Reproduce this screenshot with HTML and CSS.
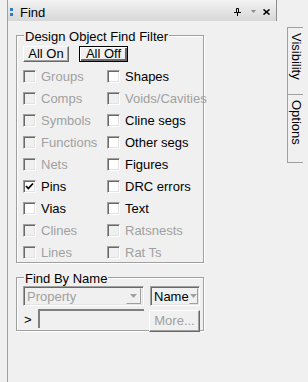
FILE: index.html
```html
<!DOCTYPE html>
<html>
<head>
<meta charset="utf-8">
<link rel="stylesheet" href="styles.css">
</head>
<body>
<div class="window">
  <div class="edge"></div>
  <div class="panel">
    <div class="titlebar">
      <span class="grip"><i></i><i></i></span>
      <span class="title">Find</span>
      <span class="tools">
        <svg class="pin" width="7" height="8" viewBox="0 0 7 8"><path d="M2.5 0.5h2v4h-2z M0 4.5h7 M3.5 4.5v3.5" fill="none" stroke="#000"/></svg>
        <svg class="menu" width="5" height="3" viewBox="0 0 5 3"><path d="M0 0h5l-2.5 3z" fill="#8a8a8a"/></svg>
        <svg class="close" width="7" height="6" viewBox="0 0 7 6"><path d="M0.5 0.5l6 5 M6.5 0.5l-6 5" stroke="#000" stroke-width="1.6"/></svg>
      </span>
    </div>
    <div class="content">
      <div class="group filter">
        <span class="group-title">Design Object Find Filter</span>
        <div class="btn-row">
          <button class="btn btn-on">All On</button>
          <button class="btn btn-off btn-default">All Off</button>
        </div>
        <div class="checks">
          <label class="chk disabled"><span class="box"></span>Groups</label>
          <label class="chk"><span class="box"></span>Shapes</label>
          <label class="chk disabled"><span class="box"></span>Comps</label>
          <label class="chk disabled"><span class="box"></span>Voids/Cavities</label>
          <label class="chk disabled"><span class="box"></span>Symbols</label>
          <label class="chk"><span class="box"></span>Cline segs</label>
          <label class="chk disabled"><span class="box"></span>Functions</label>
          <label class="chk"><span class="box"></span>Other segs</label>
          <label class="chk disabled"><span class="box"></span>Nets</label>
          <label class="chk"><span class="box"></span>Figures</label>
          <label class="chk"><span class="box"><svg width="9" height="9" viewBox="0 0 9 9"><path d="M1 4l2.3 2.5L8 1.5" fill="none" stroke="#000" stroke-width="1.8"/></svg></span>Pins</label>
          <label class="chk"><span class="box"></span>DRC errors</label>
          <label class="chk"><span class="box"></span>Vias</label>
          <label class="chk"><span class="box"></span>Text</label>
          <label class="chk disabled"><span class="box"></span>Clines</label>
          <label class="chk disabled"><span class="box"></span>Ratsnests</label>
          <label class="chk disabled"><span class="box"></span>Lines</label>
          <label class="chk disabled"><span class="box"></span>Rat Ts</label>
        </div>
      </div>
      <div class="group byname">
        <span class="group-title">Find By Name</span>
        <div class="row">
          <div class="combo combo-prop disabled"><span class="combo-text">Property</span><span class="combo-btn"><svg width="7" height="4" viewBox="0 0 7 4"><path d="M0 0h7l-3.5 4z" fill="#a0a0a0"/></svg></span></div>
          <div class="combo combo-name"><span class="combo-text">Name</span><span class="combo-btn"><svg width="7" height="4" viewBox="0 0 7 4"><path d="M0 0h7l-3.5 4z" fill="#a0a0a0"/></svg></span></div>
        </div>
        <div class="row row2">
          <span class="prompt">&gt;</span>
          <div class="input"></div>
          <button class="btn btn-more" disabled>More...</button>
        </div>
      </div>
    </div>
  </div>
  <div class="tabs">
    <div class="tab tab-vis">Visibility</div>
    <div class="tab tab-opt">Options</div>
  </div>
</div>
</body>
</html>
```
FILE: styles.css
```css
* { box-sizing: border-box; }
html, body {
  margin: 0;
  padding: 0;
  width: 308px;
  height: 382px;
  overflow: hidden;
  background: #f0f0f0;
  font-family: "Liberation Sans Narrow", "Arial Narrow", "Liberation Sans", Arial, sans-serif;
  font-size: 13px;
  color: #000;
}
.window {
  display: flex;
  height: 382px;
}
.edge {
  width: 8px;
  flex: none;
  border-right: 1px solid #a0a0a0;
}
.panel {
  width: 269px;
  flex: none;
  display: flex;
  flex-direction: column;
}
.titlebar {
  height: 21px;
  display: flex;
  align-items: flex-start;
  padding-top: 5px;
  line-height: 15px;
  background: linear-gradient(#f3f3f3, #d7d7d7);
  border-right: 1px solid #8c8c8c;
}
.grip {
  width: 3px;
  margin: 3px 7px 0 2px;
  display: flex;
  flex-direction: column;
  gap: 2px;
}
.grip i {
  display: block;
  width: 3px;
  height: 3px;
  background: #2e7bc4;
}
.title { flex: 1; }
.tools {
  display: flex;
  align-items: center;
  height: 11px;
  margin-top: 1px;
  padding-right: 6px;
}
.pin { margin-right: 10px; }
.menu { margin-right: 7px; }
.content {
  padding: 14px 0 0 8px;
}
.group {
  position: relative;
  width: 188px;
  border: 1px solid #a0a0a0;
  box-shadow: 1px 1px 0 #fff, inset 1px 1px 0 #fff;
}
.group-title {
  position: absolute;
  top: -7px;
  left: 7px;
  padding: 0 1px;
  line-height: 15px;
  background: #f0f0f0;
}
.filter {
  padding: 10px 0 3px 6px;
}
.btn-row {
  display: flex;
  gap: 10px;
  margin-bottom: 8px;
}
.btn {
  font: inherit;
  color: #000;
  height: 16px;
  padding: 0;
  line-height: 12px;
  background: #f0f0f0;
  border: 1px solid;
  border-color: #fff #696969 #696969 #fff;
  box-shadow: inset -1px -1px 0 #a0a0a0;
}
.btn-on { width: 46px; }
.btn-off { width: 49px; }
.btn-default {
  border-color: #000;
  box-shadow: inset 1px 1px 0 #fff, inset -2px -2px 0 #696969;
}
.checks {
  display: grid;
  grid-template-columns: 84px 1fr;
  row-gap: 9px;
}
.chk {
  display: flex;
  align-items: center;
  height: 13px;
  white-space: nowrap;
}
.box {
  width: 13px;
  height: 13px;
  flex: none;
  margin-right: 5px;
  background: #fff;
  border: 1px solid;
  border-color: #a0a0a0 #fff #fff #a0a0a0;
  box-shadow: inset 1px 1px 0 #696969, inset -1px -1px 0 #e3e3e3;
  display: flex;
  align-items: center;
  justify-content: center;
}
.chk.disabled { color: #a0a0a0; }
.chk.disabled .box {
  background: #f0f0f0;
}
.byname {
  margin-top: 14px;
  padding: 8px 0 0 6px;
  height: 54px;
}
.row {
  display: flex;
  gap: 6px;
}
.combo {
  height: 20px;
  display: flex;
  align-items: center;
  border: 1px solid;
  border-color: #a0a0a0 #fff #fff #a0a0a0;
  box-shadow: inset 1px 1px 0 #696969, inset -1px -1px 0 #e3e3e3;
  padding: 2px 2px 2px 3px;
}
.combo-text { flex: 1; line-height: 15px; }
.combo-prop { width: 121px; }
.combo-prop .combo-text { color: #a0a0a0; }
.combo-name { width: 50px; }
.combo-btn {
  width: 15px;
  height: 16px;
  background: #f0f0f0;
  border: 1px solid;
  border-color: #f0f0f0 #a0a0a0 #a0a0a0 #f0f0f0;
  display: flex;
  align-items: center;
  justify-content: center;
}
.row2 {
  margin-top: 3px;
  align-items: flex-start;
  gap: 0;
}
.prompt {
  width: 15px;
  padding-left: 1px;
  margin-top: 3px;
  line-height: 15px;
}
.input {
  width: 106px;
  height: 19px;
  border-top: 2px solid #808080;
  border-left: 2px solid #808080;
  background: #f0f0f0;
}
.btn-more {
  width: 51px;
  height: 22px;
  margin-left: 5px;
  margin-top: 1px;
  color: #a0a0a0;
}
.tabs {
  padding: 27px 0 0 10px;
}
.tab {
  writing-mode: vertical-rl;
  width: 16px;
  border: 1px solid #a0a0a0;
  border-right: none;
  line-height: 14px;
  font-family: "Liberation Sans", Arial, sans-serif;
  font-size: 13px;
  padding: 5px 0 0 1px;
  text-align: start;
}
.tab-vis {
  height: 68px;
  background: #f0f0f0;
}
.tab-opt {
  height: 68px;
  border-top: none;
}
```
